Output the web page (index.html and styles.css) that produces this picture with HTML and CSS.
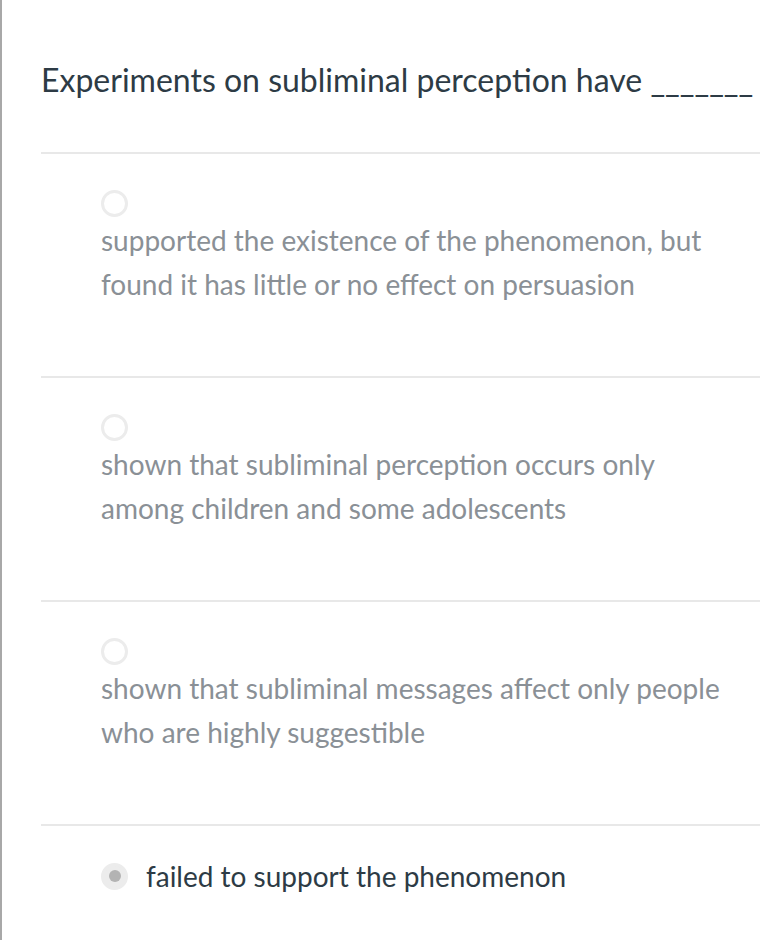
FILE: index.html
```html
<!DOCTYPE html>
<html lang="en">
  <head>
    <meta charset="UTF-8" />
    <meta name="viewport" content="width=device-width, initial-scale=1.0" />
    <title>Quiz Question</title>
    <link rel="stylesheet" href="styles.css">
  </head>
  <body>
    <div class="question">
      <h2 class="question-text">Experiments on subliminal perception have _______</h2>

      <div class="answers">
        <label class="answer">
          <span class="radio"></span>
          <span class="answer-text">supported the existence of the phenomenon, but found it has little or no effect on persuasion</span>
        </label>
        <label class="answer">
          <span class="radio"></span>
          <span class="answer-text">shown that subliminal perception occurs only among children and some adolescents</span>
        </label>
        <label class="answer">
          <span class="radio"></span>
          <span class="answer-text">shown that subliminal messages affect only people who are highly suggestible</span>
        </label>
        <label class="answer selected">
          <span class="radio"></span>
          <span class="answer-text">failed to support the phenomenon</span>
        </label>
      </div>
    </div>
  </body>
</html>
```

FILE: styles.css
```css
* {
  margin: 0;
  padding: 0;
  box-sizing: border-box;
}

body {
  font-family: Lato, "Open Sans", sans-serif;
  background-color: #fff;
  color: #2d3b45;
  overflow: hidden;
}

.question {
  min-height: 100vh;
  border-left: 2px solid #a8a8a8;
  padding-left: 39px;
}

.question-text {
  font-size: 32px;
  font-weight: 400;
  line-height: 40px;
  padding-top: 60px;
  padding-bottom: 52px;
  white-space: nowrap;
}

.answer {
  display: flex;
  flex-wrap: wrap;
  align-items: center;
  column-gap: 18px;
  row-gap: 1px;
  border-top: 2px solid #e8e8e8;
  padding: 36px 0 70px 60px;
  cursor: pointer;
}

.radio {
  width: 27px;
  height: 27px;
  border: 3px solid #ececec;
  border-radius: 50%;
  background: #fff;
  display: flex;
  align-items: center;
  justify-content: center;
}

.answer-text {
  max-width: 630px;
  font-size: 28px;
  line-height: 44px;
  color: #8a9096;
}

.answer.selected {
  padding-top: 28px;
}

.answer.selected .radio {
  background: #ececec;
}

.answer.selected .radio::after {
  content: "";
  width: 12px;
  height: 12px;
  border-radius: 50%;
  background: #b3b3b3;
}

.answer.selected .answer-text {
  color: #2d3b45;
}
```
